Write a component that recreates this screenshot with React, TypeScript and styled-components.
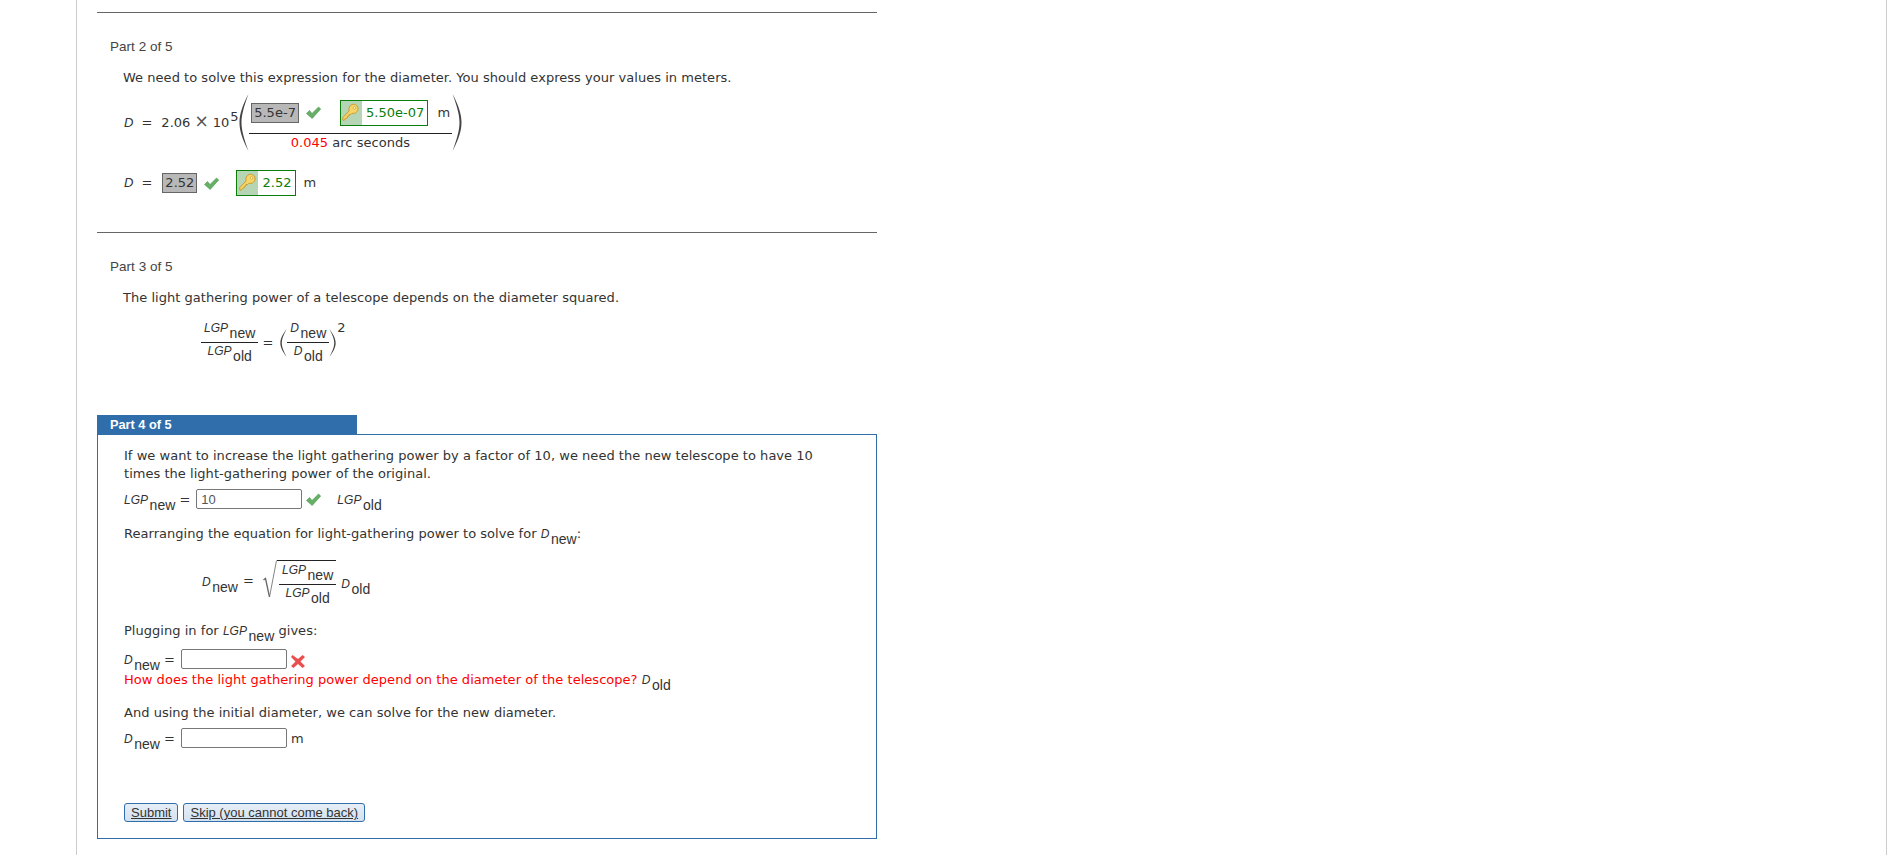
import styled, { createGlobalStyle } from "styled-components"

const GlobalStyle = createGlobalStyle`
    html, body {
        margin: 0;
        padding: 0;
        background: #fff;
        overflow: hidden;
    }
    body {
        font-family: "DejaVu Sans", Verdana, sans-serif;
        font-size: 13px;
        letter-spacing: 0.03px;
        color: #333;
    }
`

const Page = styled.div`
    box-sizing: border-box;
    width: 1811px;
    height: 855px;
    margin-left: 76px;
    padding: 12px 0 0 20px;
    border-left: 1px solid #ccc;
    border-right: 1px solid #ccc;
    overflow: hidden;
`

const Column = styled.div`
    width: 780px;
`

const Section = styled.section<{ $height: number }>`
    box-sizing: border-box;
    height: ${(p) => p.$height}px;
    border-top: 1px solid #666;
`

const PartTitle = styled.h3`
    margin: 0;
    padding: 26px 0 0 13px;
    font: 400 13.5px/16px "Liberation Sans", Arial, sans-serif;
    color: #444;
`

const Lead = styled.p`
    margin: 0;
    padding: 14px 0 0 26px;
    line-height: 18px;
`

const Row = styled.div<{ $top?: number; $left?: number; $baseline?: boolean }>`
    display: flex;
    align-items: ${(p) => (p.$baseline ? "baseline" : "center")};
    padding-left: ${(p) => p.$left ?? 26}px;
    margin-top: ${(p) => p.$top ?? 0}px;
    line-height: 16px;
`

const I = styled.i<{ $size?: number }>`
    font-family: "Liberation Sans", Arial, sans-serif;
    font-size: ${(p) => p.$size ?? 12}px;
`

const Term = styled.span<{ $lift?: number }>`
    white-space: nowrap;
    margin-bottom: ${(p) => p.$lift ?? 0}px;
`

const Sub = styled.span`
    margin-left: 1.5px;
    font: 14px/0 "Liberation Sans", Arial, sans-serif;
    vertical-align: -6px;
`

const Sup = styled.span`
    margin-left: 1px;
    line-height: 0;
    vertical-align: 6px;
`

const Times = styled.span`
    margin: 0 4px;
    font-size: 17px;
    line-height: 0;
    color: #555;
`

const Exponent = styled.span`
    align-self: flex-start;
    margin-left: 1px;
`

const Eq = styled.span<{ $left?: number; $right?: number; $lift?: number }>`
    margin: 0 ${(p) => p.$right ?? 6}px ${(p) => p.$lift ?? 0}px ${(p) => p.$left ?? 4}px;
`

const Unit = styled.span<{ $left: number }>`
    margin-left: ${(p) => p.$left}px;
`

const Graded = styled.span`
    box-sizing: border-box;
    display: inline-block;
    height: 20px;
    padding: 0 2px;
    line-height: 17px;
    background: #b8b8b8;
    border: 1px solid #666;
    color: #333;
`

const KeyBox = styled.span<{ $left: number }>`
    box-sizing: border-box;
    display: inline-flex;
    align-items: center;
    height: 26px;
    margin-left: ${(p) => p.$left}px;
    padding-right: 3px;
    border: 1px solid #0a7d0a;
    color: #0a7d0a;
`

const KeySwatch = styled.span`
    display: flex;
    align-items: center;
    justify-content: center;
    width: 21px;
    height: 24px;
    margin-right: 4px;
    background: #b5d5b5;
`

const Fraction = styled.span`
    display: inline-flex;
    flex-direction: column;
    align-items: stretch;
`

const Over = styled.span<{ $pad?: number }>`
    display: block;
    height: 22px;
    padding: 0 ${(p) => p.$pad ?? 3}px;
    text-align: center;
    white-space: nowrap;
    border-bottom: 1px solid #222;
`

const Under = styled.span<{ $pad?: number }>`
    display: block;
    height: 22px;
    padding: 0 ${(p) => p.$pad ?? 3}px;
    text-align: center;
    white-space: nowrap;
`

const AnswerOver = styled.span`
    display: flex;
    align-items: center;
    padding: 5px 2px 7px 2.5px;
    border-bottom: 1px solid #222;
`

const AnswerUnder = styled.span`
    display: block;
    height: 17px;
    line-height: 18px;
    text-align: center;
`

const Red = styled.span`
    color: #f00;
`

const Tab = styled.div`
    box-sizing: border-box;
    width: 260px;
    height: 19px;
    padding-left: 13px;
    background: #2f6eab;
    color: #fff;
    font: 700 12.75px/19px "Liberation Sans", Arial, sans-serif;
    letter-spacing: 0;
`

const ActiveBox = styled.div`
    box-sizing: border-box;
    height: 405px;
    border: 1px solid #2f6eab;
    padding: 12px 26px 0;
`

const Para = styled.p<{ $top?: number }>`
    margin: ${(p) => p.$top ?? 0}px 0 0;
    line-height: 18px;
`

const AnswerInput = styled.input`
    box-sizing: border-box;
    width: 106px;
    height: 20px;
    padding: 0 4px;
    border: 1px solid #777;
    border-radius: 2px;
    background: #fff;
    font: 13px "Liberation Sans", Arial, sans-serif;
    color: #555;
`

const Radical = styled.span`
    display: flex;
    align-items: flex-start;
`

const Radicand = styled.span`
    display: block;
    padding: 1px 0 0 2px;
    border-top: 1px solid #222;
`

const Actions = styled.div`
    display: flex;
    gap: 5px;
    margin-top: 55px;
`

const ActionButton = styled.button`
    box-sizing: border-box;
    height: 19px;
    padding: 0 6px;
    background: linear-gradient(#e6eef6, #d3e1ef);
    border: 1px solid #2f6eab;
    border-radius: 3px;
    font: 13px/17px "Liberation Sans", Arial, sans-serif;
    color: #333;
    text-decoration: underline;
`

const CheckMark = styled.svg<{ $left: number }>`
    flex: none;
    align-self: center;
    margin-left: ${(p) => p.$left}px;
`

const CrossMark = styled.svg`
    flex: none;
    align-self: flex-end;
    margin: 0 0 1px 4px;
`

const ParenMark = styled.svg<{ $flip?: boolean }>`
    flex: none;
    transform: ${(p) => (p.$flip ? "scaleX(-1)" : "none")};
`

function Key() {
    return (
        <KeySwatch>
            <svg width="18" height="20" viewBox="0 0 18 20">
                <path d="M10 1.500C13.500 .5 16.500 3 16 6.500 15.500 9.500 12.500 11 10 10.200L8.700 11.500 7 11.300 7 13 5.400 13.200 5.200 15 3.500 15.200 2 17.500.8 16.800.8 14.500 7 8C6.500 5 7.500 2.500 10 1.500Z" fill="#f6d468" stroke="#c9952a" strokeWidth=".9" />
                <circle cx="12.500" cy="4.800" r="1.300" fill="#fff3b8" stroke="#c9952a" strokeWidth=".6" />
            </svg>
        </KeySwatch>
    )
}

function Check({ left }: { left: number }) {
    return (
        <CheckMark $left={left} width="15" height="13" viewBox="0 0 15 13">
            <path d="M.5 7.500 3.500 4.500 6 7.500 12.500 1 14.700 3 6.200 12.500Z" fill="#66b066" stroke="#4f9650" strokeWidth=".6" />
        </CheckMark>
    )
}

function Cross() {
    return (
        <CrossMark width="14" height="13" viewBox="0 0 14 13">
            <path d="M1.500 0 7 4 11.500 0 14 2 9.500 6.500 14 11 11.500 13 7 9 2.500 13 0 11 4.500 6.500 0 2Z" fill="#e8504f" />
        </CrossMark>
    )
}

function Paren({ flip, h, w }: { flip?: boolean; h: number; w: number }) {
    return (
        <ParenMark $flip={flip} width={w} height={h} viewBox="0 0 10 57" preserveAspectRatio="none">
            <path d="M9.500 0C3 12 .5 21 .5 28.500S3 45 9.500 57C5 45 2.500 36 2.500 28.500S5 12 9.500 0Z" fill="#444" />
        </ParenMark>
    )
}

function RootSign() {
    return (
        <svg width="14" height="38" viewBox="0 0 14 38">
            <path d="M.5 20 2.500 18.500 6.500 37" fill="none" stroke="#666" strokeWidth="1.300" />
            <path d="M6.500 37 13.500.5" fill="none" stroke="#666" strokeWidth=".8" />
        </svg>
    )
}

function Symbol({ base, sub, lift }: { base: string; sub: string; lift?: number }) {
    return (
        <Term $lift={lift}>
            <I>{base}</I>
            <Sub>{sub}</Sub>
        </Term>
    )
}

function Ratio({ base, pad }: { base: string; pad?: number }) {
    return (
        <Fraction>
            <Over $pad={pad}><Symbol base={base} sub="new" /></Over>
            <Under $pad={pad}><Symbol base={base} sub="old" /></Under>
        </Fraction>
    )
}

function App(): JSX.Element {
    return (
        <>
            <GlobalStyle />
            <Page>
                <Column>
                    <Section $height={220}>
                        <PartTitle>Part 2 of 5</PartTitle>
                        <Lead>We need to solve this expression for the diameter. You should express your values in meters.</Lead>
                        <Row $top={7} $left={27}>
                            <I $size={13}>D</I>
                            <Eq $left={8} $right={9}>=</Eq>
                            <Term>2.06<Times>×</Times>10<Sup>5</Sup></Term>
                            <Paren h={57} w={10} />
                            <Fraction>
                                <AnswerOver>
                                    <Graded>5.5e-7</Graded>
                                    <Check left={7} />
                                    <KeyBox $left={19}><Key />5.50e-07</KeyBox>
                                    <Unit $left={9}>m</Unit>
                                </AnswerOver>
                                <AnswerUnder><Red>0.045</Red> arc seconds</AnswerUnder>
                            </Fraction>
                            <Paren flip h={57} w={10} />
                        </Row>
                        <Row $top={19} $left={27}>
                            <I $size={13}>D</I>
                            <Eq $left={8} $right={10}>=</Eq>
                            <Graded>2.52</Graded>
                            <Check left={7} />
                            <KeyBox $left={17}><Key />2.52</KeyBox>
                            <Unit $left={8}>m</Unit>
                        </Row>
                    </Section>
                    <Section $height={183}>
                        <PartTitle>Part 3 of 5</PartTitle>
                        <Lead>The light gathering power of a telescope depends on the diameter squared.</Lead>
                        <Row $top={13} $left={104}>
                            <Ratio base="LGP" />
                            <Eq $left={4} $right={7}>=</Eq>
                            <Paren h={28} w={7} />
                            <Ratio base="D" pad={3} />
                            <Paren flip h={28} w={7} />
                            <Exponent>2</Exponent>
                        </Row>
                    </Section>
                    <Tab>Part 4 of 5</Tab>
                    <ActiveBox>
                        <Para>If we want to increase the light gathering power by a factor of 10, we need the new telescope to have 10 times the light-gathering power of the original.</Para>
                        <Row $left={0} $top={6} $baseline>
                            <Symbol base="LGP" sub="new" />
                            <Eq>=</Eq>
                            <AnswerInput defaultValue="10" />
                            <Check left={4} />
                            <Unit $left={16}><Symbol base="LGP" sub="old" /></Unit>
                        </Row>
                        <Para $top={16}>Rearranging the equation for light-gathering power to solve for <Symbol base="D" sub="new" />:</Para>
                        <Row $left={78} $top={17}>
                            <Symbol base="D" sub="new" lift={4} />
                            <Eq $left={5} $right={9} $lift={6}>=</Eq>
                            <Radical>
                                <RootSign />
                                <Radicand><Ratio base="LGP" /></Radicand>
                            </Radical>
                            <Unit $left={5}><Symbol base="D" sub="old" lift={4} /></Unit>
                        </Row>
                        <Para $top={15}>Plugging in for <Symbol base="LGP" sub="new" /> gives:</Para>
                        <Row $left={0} $top={9} $baseline>
                            <Symbol base="D" sub="new" />
                            <Eq>=</Eq>
                            <AnswerInput />
                            <Cross />
                        </Row>
                        <Para $top={2}><Red>How does the light gathering power depend on the diameter of the telescope?</Red> <Symbol base="D" sub="old" /></Para>
                        <Para $top={15}>And using the initial diameter, we can solve for the new diameter.</Para>
                        <Row $left={0} $top={6} $baseline>
                            <Symbol base="D" sub="new" />
                            <Eq>=</Eq>
                            <AnswerInput />
                            <Unit $left={4}>m</Unit>
                        </Row>
                        <Actions>
                            <ActionButton>Submit</ActionButton>
                            <ActionButton>Skip (you cannot come back)</ActionButton>
                        </Actions>
                    </ActiveBox>
                </Column>
            </Page>
        </>
    )
}

export default App
